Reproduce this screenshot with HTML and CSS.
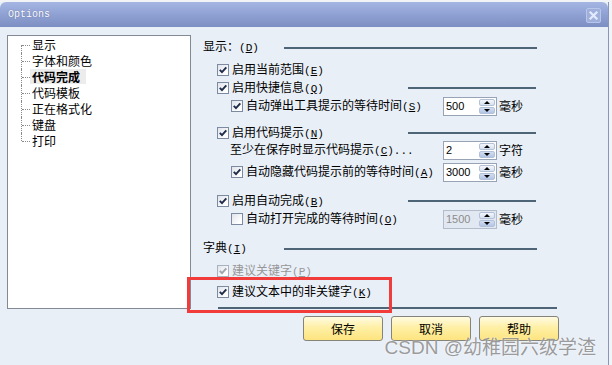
FILE: index.html
```html
<!DOCTYPE html>
<html>
<head>
<meta charset="utf-8">
<link rel="stylesheet" href="styles.css">
</head>
<body>
<div class="window">
  <div class="titlebar">
    <span class="title">Options</span>
    <span class="close"><svg width="15" height="15" viewBox="0 0 15 15"><path d="M4.5 4.5 L10.5 10.5 M10.5 4.5 L4.5 10.5" stroke="#e3eafb" stroke-width="2.2" stroke-linecap="square"/></svg></span>
  </div>
  <div class="client">
    <ul class="tree">
      <li><span>显示</span></li>
      <li><span>字体和颜色</span></li>
      <li class="sel"><span>代码完成</span></li>
      <li><span>代码模板</span></li>
      <li><span>正在格式化</span></li>
      <li><span>键盘</span></li>
      <li><span>打印</span></li>
    </ul>
    <div class="panel">
      <div class="row mt4"><span>显示：<span class="m">(<u>D</u>)</span></span><i class="line wide"></i></div>
      <div class="row ind mt7"><span class="cb"><svg width="10" height="10" viewBox="0 0 10 10"><path d="M1.8 4.8 L4 7.2 L8.3 2.4" fill="none" stroke="#1e2c48" stroke-width="1.9"/></svg></span><span>启用当前范围<span class="m">(<u>E</u>)</span></span></div>
      <div class="row ind mt2"><span class="cb"><svg width="10" height="10" viewBox="0 0 10 10"><path d="M1.8 4.8 L4 7.2 L8.3 2.4" fill="none" stroke="#1e2c48" stroke-width="1.9"/></svg></span><span>启用快捷信息<span class="m">(<u>Q</u>)</span></span><i class="line sub"></i></div>
      <div class="row ind2 mt2"><span class="cb"><svg width="10" height="10" viewBox="0 0 10 10"><path d="M1.8 4.8 L4 7.2 L8.3 2.4" fill="none" stroke="#1e2c48" stroke-width="1.9"/></svg></span><span>自动弹出工具提示的等待时间<span class="m">(<u>S</u>)</span></span>
        <div class="sg"><div class="spin"><span class="val">500</span><span class="btns"><i class="up"></i><i class="dn"></i></span></div><span>毫秒</span></div>
      </div>
      <div class="row ind mt11"><span class="cb"><svg width="10" height="10" viewBox="0 0 10 10"><path d="M1.8 4.8 L4 7.2 L8.3 2.4" fill="none" stroke="#1e2c48" stroke-width="1.9"/></svg></span><span>启用代码提示<span class="m">(<u>N</u>)</span></span><i class="line sub"></i></div>
      <div class="row txt2 mt1"><span>至少在保存时显示代码提示<span class="m">(<u>C</u>)...</span></span>
        <div class="sg"><div class="spin"><span class="val">2</span><span class="btns"><i class="up"></i><i class="dn"></i></span></div><span>字符</span></div>
      </div>
      <div class="row ind2 mt6"><span class="cb"><svg width="10" height="10" viewBox="0 0 10 10"><path d="M1.8 4.8 L4 7.2 L8.3 2.4" fill="none" stroke="#1e2c48" stroke-width="1.9"/></svg></span><span>自动隐藏代码提示前的等待时间<span class="m">(<u>A</u>)</span></span>
        <div class="sg"><div class="spin"><span class="val">3000</span><span class="btns"><i class="up"></i><i class="dn"></i></span></div><span>毫秒</span></div>
      </div>
      <div class="row ind mt13"><span class="cb"><svg width="10" height="10" viewBox="0 0 10 10"><path d="M1.8 4.8 L4 7.2 L8.3 2.4" fill="none" stroke="#1e2c48" stroke-width="1.9"/></svg></span><span>启用自动完成<span class="m">(<u>B</u>)</span></span><i class="line sub"></i></div>
      <div class="row ind2 mt2"><span class="cb"></span><span>自动打开完成的等待时间<span class="m">(<u>O</u>)</span></span>
        <div class="sg"><div class="spin off"><span class="val">1500</span><span class="btns"><i class="up"></i><i class="dn"></i></span></div><span>毫秒</span></div>
      </div>
      <div class="row mt13"><span>字典<span class="m">(<u>I</u>)</span></span><i class="line wide"></i></div>
      <div class="row ind mt7 dis"><span class="cb"><svg width="10" height="10" viewBox="0 0 10 10"><path d="M1.8 4.8 L4 7.2 L8.3 2.4" fill="none" stroke="#9ea4ad" stroke-width="1.9"/></svg></span><span>建议关键字<span class="m">(<u>P</u>)</span></span></div>
      <div class="row ind mt5"><span class="cb"><svg width="10" height="10" viewBox="0 0 10 10"><path d="M1.8 4.8 L4 7.2 L8.3 2.4" fill="none" stroke="#1e2c48" stroke-width="1.9"/></svg></span><span>建议文本中的非关键字<span class="m">(<u>K</u>)</span></span></div>
      <i class="line bottom"></i>
      <div class="buttons">
        <span class="btn">保存</span>
        <span class="btn">取消</span>
        <span class="btn">帮助</span>
      </div>
    </div>
  </div>
  <div class="redbox"></div>
  <div class="wm">CSDN @幼稚园六级学渣</div>
</div>
</body>
</html>
```

FILE: styles.css
```css
* { box-sizing: border-box; }
html, body { margin: 0; padding: 0; }
body {
  width: 612px;
  height: 365px;
  overflow: hidden;
  background: #f2f3f5;
  font-family: "Noto Sans CJK SC", "Noto Sans CJK JP", sans-serif;
  font-size: 12px;
  color: #000;
}
.window {
  position: relative;
  margin-top: 2px;
  width: 609px;
  height: 363px;
  background: #e9eff7;
  border-right: 1px solid #8796bb;
}
.titlebar {
  height: 25px;
  display: flex;
  align-items: center;
  justify-content: space-between;
  padding: 0 7px 0 8px;
  background: linear-gradient(#a5b6e3, #8fa1d3 50%, #7d8fc2);
  border-radius: 6px 6px 0 0;
}
.title {
  font-family: "Liberation Mono", monospace;
  font-size: 10px;
  color: #fff;
  text-shadow: 0 0 1px rgba(40, 50, 100, 0.6);
}
.close {
  width: 15px;
  height: 15px;
  border: 1px solid #b9c6ea;
  border-radius: 2px;
  background: #9eafdc;
  display: flex;
  align-items: center;
  justify-content: center;
  margin-top: 1px;
}
.close svg { display: block; flex: none; }
.client {
  display: flex;
  padding: 8px 0 0 7px;
}
.tree {
  flex: none;
  width: 184px;
  height: 274px;
  margin: 0;
  padding: 1px 0 0 24px;
  list-style: none;
  background: #fff;
  border: 1px solid #838a96;
}
.tree li {
  position: relative;
  height: 16px;
  line-height: 16px;
  white-space: nowrap;
}
.tree li::before {
  content: "";
  position: absolute;
  left: -11px;
  top: 0;
  height: 100%;
  border-left: 1px dotted #8a8a8a;
}
.tree li:first-child::before { top: 50%; height: 50%; }
.tree li:last-child::before { height: 50%; }
.tree li::after {
  content: "";
  position: absolute;
  left: -10px;
  top: 8px;
  width: 8px;
  border-top: 1px dotted #8a8a8a;
}
.tree li.sel span {
  display: inline-block;
  margin-left: -2px;
  padding: 0 6px 0 2px;
  line-height: 15px;
  background: #ececec;
  font-weight: 700;
}
.panel {
  flex: none;
  width: 368px;
  padding-left: 12px;
  display: flex;
  flex-direction: column;
}
.row {
  display: flex;
  align-items: center;
  height: 16px;
  line-height: 16px;
  white-space: nowrap;
}
.ind { margin-left: 14px; }
.ind2 { margin-left: 28px; }
.txt2 { margin-left: 27px; }
.mt1 { margin-top: 1px; }
.mt2 { margin-top: 2px; }
.mt4 { margin-top: 4px; }
.mt5 { margin-top: 5px; }
.mt6 { margin-top: 6px; }
.mt7 { margin-top: 7px; }
.mt11 { margin-top: 11px; }
.mt13 { margin-top: 13px; }
.m {
  font-family: "Liberation Mono", monospace;
  font-size: 11px;
}
.cb {
  flex: none;
  width: 12px;
  height: 12px;
  margin-right: 3px;
  border: 1px solid #7d8ba2;
  background: linear-gradient(135deg, #dfe3ea, #ffffff 80%);
  display: flex;
  align-items: center;
  justify-content: center;
}
.cb svg { display: block; }
.dis { color: #979797; }
.dis .cb { border-color: #a9b2c0; }
.line {
  display: block;
  height: 2px;
  background: #4e6577;
  margin-left: auto;
}
.line.wide { width: 253px; margin-right: 22px; margin-top: 2px; }
.line.sub { width: 128px; margin-right: 23px; }
.line.bottom { width: 339px; margin: 7px 0 0 15px; }
.sg {
  margin-left: auto;
  width: 116px;
  display: flex;
  align-items: center;
  gap: 2px;
}
.spin {
  width: 54px;
  height: 19px;
  border: 1px solid #98a4b6;
  background: #fff;
  display: flex;
}
.val {
  flex: 1;
  padding-left: 2px;
  font-family: "Liberation Sans", sans-serif;
  font-size: 11px;
  line-height: 17px;
}
.btns {
  width: 17px;
  display: flex;
  flex-direction: column;
  gap: 1px;
  padding: 1px 1px 1px 0;
}
.btns i {
  flex: 1;
  display: flex;
  align-items: center;
  justify-content: center;
  border: 1px solid #b3c1d8;
  border-radius: 2px;
  background: linear-gradient(#f4f7fc, #d6e0f0);
}
.btns i.dn { background: linear-gradient(#d3def1, #b2c5e6); }
.btns i::after {
  content: "";
  width: 0;
  height: 0;
  border-left: 3px solid transparent;
  border-right: 3px solid transparent;
}
.btns i.up::after { border-bottom: 3px solid #000; }
.btns i.dn::after { border-top: 3px solid #000; }
.spin.off { background: #e2e8f1; border-color: #b3bccb; }
.spin.off .val { color: #8c8c8c; }
.buttons {
  display: flex;
  justify-content: flex-end;
  gap: 8px;
  margin-top: 7px;
}
.btn {
  width: 80px;
  height: 25px;
  border: 1px solid #86837a;
  border-radius: 3px;
  background: linear-gradient(#fffbe2, #fff0a6 45%, #fde47f);
  display: flex;
  align-items: center;
  justify-content: center;
}
.redbox {
  position: absolute;
  left: 187px;
  top: 275px;
  width: 205px;
  height: 36px;
  border: 3px solid #f23c3c;
}
.wm {
  position: absolute;
  right: 12px;
  top: 334px;
  font-family: "Liberation Sans", "Noto Sans CJK SC", sans-serif;
  font-size: 19px;
  line-height: 24px;
  color: rgba(130, 130, 130, 0.8);
  text-shadow: 0 0 2px rgba(255, 255, 255, 0.9);
  white-space: nowrap;
}
```
